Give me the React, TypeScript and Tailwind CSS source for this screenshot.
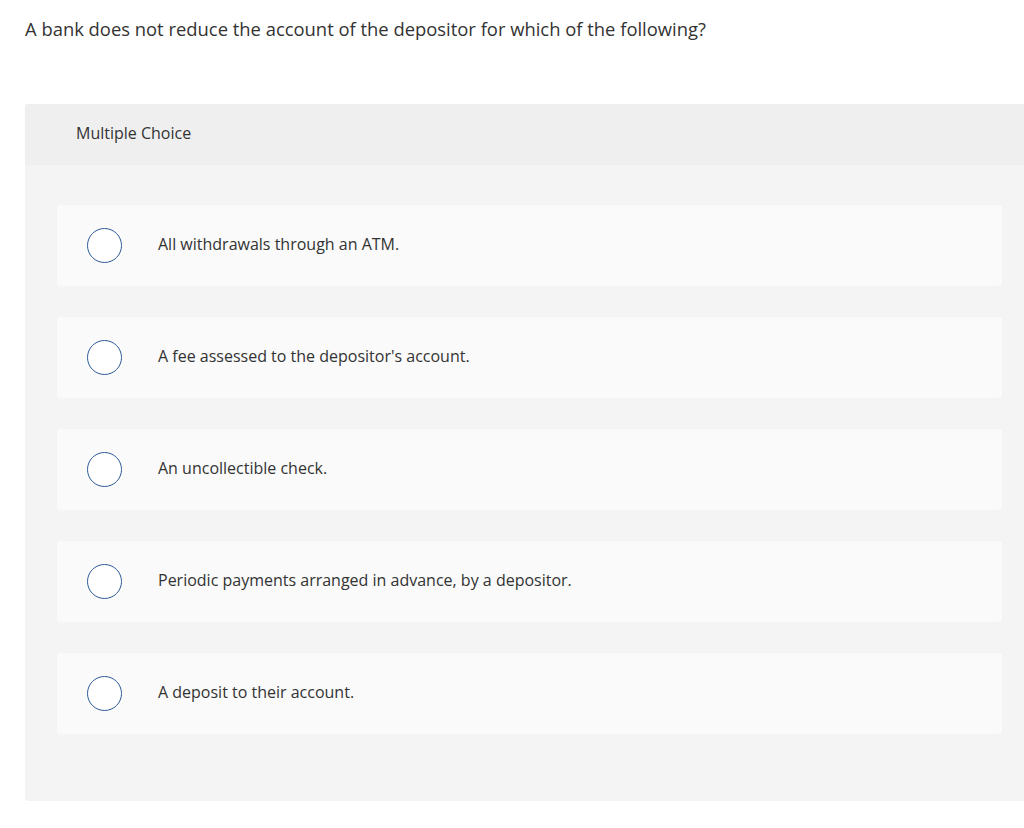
const options = [
  "All withdrawals through an ATM.",
  "A fee assessed to the depositor's account.",
  "An uncollectible check.",
  "Periodic payments arranged in advance, by a depositor.",
  "A deposit to their account.",
];

export default function App() {
  return (
    <div
      className="min-h-[828px] w-[1024px] overflow-hidden bg-white text-[#333]"
      style={{ fontFamily: "'Open Sans', Lato, sans-serif" }}
    >
      <h1 className="pl-[25px] pt-[17px] text-[18.4px] leading-[24px] font-normal">
        A bank does not reduce the account of the depositor for which of the following?
      </h1>

      <div className="ml-[25px] mt-[63px] w-[1009px] rounded-[3px] bg-[#f4f4f4]">
        <div className="flex h-[61px] items-center rounded-t-[3px] bg-[#efefef] pl-[51px] pb-[3px] text-[16px]">
          Multiple Choice
        </div>
        <div className="flex flex-col gap-[31px] px-[32px] pt-[40px] pb-[67px]">
          {options.map((opt) => (
            <label
              key={opt}
              className="flex h-[81px] cursor-pointer items-center rounded-[3px] bg-[#fafafa]"
            >
              <span className="ml-[30px] h-[35px] w-[35px] shrink-0 rounded-full border-[1.5px] border-[#2f5d97] bg-white" />
              <span className="ml-[36px] mb-[3px] text-[16px]">{opt}</span>
            </label>
          ))}
        </div>
      </div>
    </div>
  );
}
